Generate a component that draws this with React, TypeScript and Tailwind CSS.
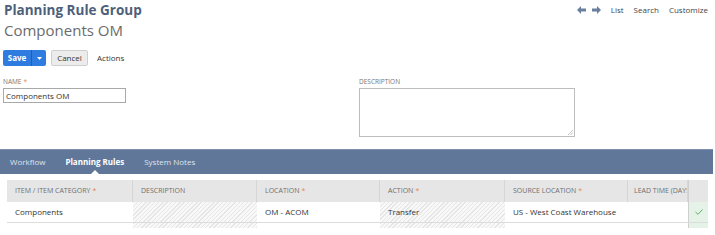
import React from "react";

const hatch =
  "bg-[repeating-linear-gradient(135deg,#e6e6e6_0px,#e6e6e6_1px,#f8f8f8_1px,#f8f8f8_3px)]";

const columns = [
  { label: "ITEM / ITEM CATEGORY", required: true, width: "w-[126px]" },
  { label: "DESCRIPTION", required: false, width: "w-[124px]" },
  { label: "LOCATION", required: true, width: "w-[123px]" },
  { label: "ACTION", required: true, width: "w-[125px]" },
  { label: "SOURCE LOCATION", required: true, width: "w-[123px]" },
  { label: "LEAD TIME (DAYS)", required: false, width: "w-[60px]" },
];

const row = [
  { text: "Components", hatched: false },
  { text: "", hatched: true },
  { text: "OM - ACOM", hatched: false },
  { text: "Transfer", hatched: true },
  { text: "US - West Coast Warehouse", hatched: false },
  { text: "", hatched: false },
];

const Star = () => <span className="ml-[2px] text-[#e8864b]">*</span>;

export default function App() {
  return (
    <div className="h-[235px] w-[715px] overflow-hidden bg-white font-['Open_Sans',sans-serif] text-[#333]">
      <div className="flex justify-between">
        <div className="pl-[4px] pt-[1px]">
          <div className="text-[13.5px] font-bold leading-[18px] text-[#4d5f7a]">
            Planning Rule Group
          </div>
          <div className="text-[15px] leading-[22px] text-[#6b6b6b]">
            Components OM
          </div>
        </div>
        <div className="flex items-center gap-[10px] pr-[7px] pt-[4px] self-start text-[8px] text-[#444]">
          <div className="flex items-center gap-[6px] text-[#6a7f9e]">
            <svg width="9" height="8" viewBox="0 0 9 8">
              <path d="M0 4 L4 0 L4 2.5 L9 2.5 L9 5.5 L4 5.5 L4 8 Z" fill="currentColor" />
            </svg>
            <svg width="9" height="8" viewBox="0 0 9 8">
              <path d="M9 4 L5 0 L5 2.5 L0 2.5 L0 5.5 L5 5.5 L5 8 Z" fill="currentColor" />
            </svg>
          </div>
          <span>List</span>
          <span>Search</span>
          <span>Customize</span>
        </div>
      </div>

      <div className="mt-[9px] flex items-center pl-[3px]">
        <div className="flex h-[16px] overflow-hidden rounded-[2px] bg-[#2f7ce0] text-white">
          <span className="flex w-[28px] items-center justify-center text-[8px] font-bold">
            Save
          </span>
          <span className="flex w-[15px] items-center justify-center border-l border-[#1d5fb8]">
            <svg width="5" height="3" viewBox="0 0 5 3">
              <path d="M0 0 L5 0 L2.5 3 Z" fill="white" />
            </svg>
          </span>
        </div>
        <div className="ml-[5px] flex h-[16px] w-[37px] items-center justify-center rounded-[2px] border border-[#cfcfcf] bg-[#ececec] text-[8px]">
          Cancel
        </div>
        <span className="ml-[9px] text-[8px]">Actions</span>
      </div>

      <div className="mt-[10px] flex">
        <div className="w-[359px] pl-[3px]">
          <div className="text-[6.5px] leading-[12px] text-[#777]">
            NAME
            <Star />
          </div>
          <div className="flex h-[15px] w-[123px] items-center border border-[#a9a9a9] px-[2px] text-[8px]">
            Components OM
          </div>
        </div>
        <div>
          <div className="text-[6.5px] leading-[12px] text-[#777]">DESCRIPTION</div>
          <div className="relative h-[49px] w-[216px] border border-[#bdbdbd]">
            <svg className="absolute bottom-[1px] right-[1px]" width="5" height="5" viewBox="0 0 5 5">
              <path d="M5 0 L0 5 M5 2.5 L2.5 5" stroke="#aaa" strokeWidth="0.7" />
            </svg>
          </div>
        </div>
      </div>

      <div className="mt-[12px] flex h-[25px] w-[713px] items-center border-t border-[#7c90ad] bg-[#607799] text-[8px]">
        <span className="ml-[10px] text-[#dfe5ee]">Workflow</span>
        <span className="relative ml-[20px] flex h-full items-center font-bold text-white">
          Planning Rules
          <span className="absolute bottom-0 left-1/2 -ml-[4px] h-0 w-0 border-x-[4px] border-b-[4px] border-x-transparent border-b-white" />
        </span>
        <span className="ml-[20px] text-[#dfe5ee]">System Notes</span>
      </div>

      <div className="ml-[7px] mt-[6px] w-[701px]">
        <div className="flex h-[22px] bg-[#e6e6e6]">
          {columns.map((c, i) => (
            <div
              key={c.label}
              className={`${c.width} flex items-center overflow-hidden whitespace-nowrap border-r border-[#d6d6d6] ${i === 5 ? "pl-[6px]" : "px-[8px]"} text-[7px] text-[#6f6f6f]`}
            >
              {c.label}
              {c.required && <Star />}
            </div>
          ))}
          <div className="w-[20px] border-l border-[#cfcfcf]" />
        </div>
        <div className="flex h-[21px] border-b border-[#dcdcdc]">
          {row.map((cell, i) => (
            <div
              key={i}
              className={`${columns[i].width} flex items-center px-[8px] text-[8px] ${cell.hatched ? hatch : ""}`}
            >
              {cell.text}
            </div>
          ))}
          <div className="flex w-[20px] items-center justify-center border-l border-[#cfcfcf] bg-[#e5f2e7]">
            <svg width="8" height="6" viewBox="0 0 8 6">
              <path d="M0.5 3 L3 5.3 L7.5 0.5" fill="none" stroke="#5cb46a" strokeWidth="1" />
            </svg>
          </div>
        </div>
        <div className="flex h-[5px]">
          {row.map((cell, i) => (
            <div key={i} className={`${columns[i].width} ${cell.hatched ? hatch : ""}`} />
          ))}
          <div className="w-[20px] border-l border-[#cfcfcf] bg-[#e5f2e7]" />
        </div>
      </div>
    </div>
  );
}
